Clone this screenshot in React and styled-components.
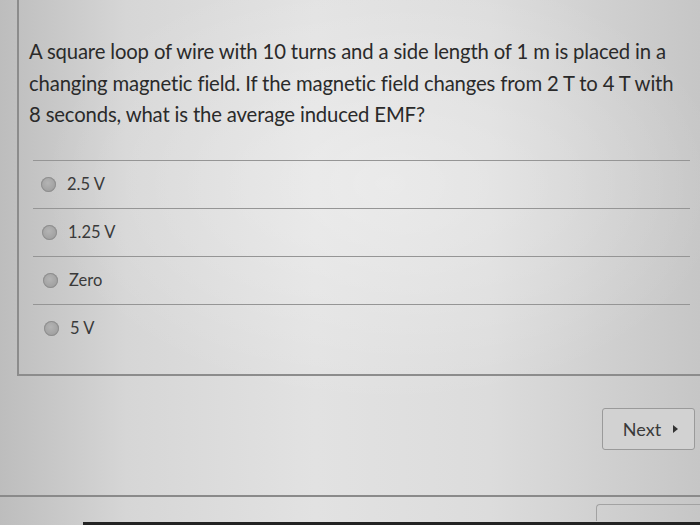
import styled, { createGlobalStyle } from "styled-components";

const GlobalStyle = createGlobalStyle`
  html, body {
    margin: 0;
    padding: 0;
  }
  body {
    font-family: Lato, "Open Sans", "Liberation Sans", sans-serif;
    color: #2f2f2f;
  }
`;

const Screen = styled.div`
  width: 700px;
  height: 525px;
  overflow: hidden;
  display: flex;
  flex-direction: column;
  background:
    radial-gradient(ellipse 70% 60% at 55% 35%, rgba(255, 255, 255, 0.35), rgba(255, 255, 255, 0) 70%),
    linear-gradient(90deg, #bdbdbd 0%, #d6d6d6 18%, #e2e2e2 45%, #dcdcdc 70%, #c6c6c6 100%);
`;

const Card = styled.section`
  margin-left: 17px;
  padding: 36px 10px 22px 10px;
  border-left: 2px solid #8c8c8c;
  border-bottom: 2px solid #8c8c8c;
  display: flex;
  flex-direction: column;
`;

const Question = styled.p`
  margin: 0;
  font-size: 20.3px;
  line-height: 31.5px;
  color: #2a2a2a;
  letter-spacing: -0.15px;
  white-space: nowrap;
`;

const Options = styled.ul`
  list-style: none;
  margin: 29px 0 0 4px;
  padding: 0;
`;

const Option = styled.li`
  height: 47px;
  border-top: 1.5px solid #959595;
  display: flex;
  align-items: center;
  gap: 11px;
  padding-left: ${(props) => props.$indent}px;
  font-size: 16.5px;
  color: #3a3a3a;
`;

const Radio = styled.span`
  width: 15px;
  height: 15px;
  border-radius: 50%;
  flex-shrink: 0;
  background: radial-gradient(circle at 45% 40%, #b4b4b4, #979797);
  box-shadow: inset 0 0 0 1px #8f8f8f;
`;

const Footer = styled.div`
  display: flex;
  justify-content: flex-end;
  padding: 32px 5px 0 0;
`;

const NextButton = styled.button`
  width: 93px;
  height: 42px;
  display: flex;
  align-items: center;
  justify-content: center;
  gap: 12px;
  padding: 0 0 0 4px;
  border: 1px solid #9a9a9a;
  border-radius: 3px;
  background: #d2d2d2;
  font-family: inherit;
  font-size: 18px;
  color: #3a3a3a;
`;

const Arrow = styled.span`
  width: 0;
  height: 0;
  border-top: 4px solid transparent;
  border-bottom: 4px solid transparent;
  border-left: 5px solid #333;
`;

const Divider = styled.div`
  margin-top: 45px;
  border-top: 2px solid #8a8a8a;
`;

const BottomRow = styled.div`
  flex: 1;
  display: flex;
  flex-direction: column;
  justify-content: space-between;
  padding-top: 7px;
`;

const NextBox = styled.div`
  align-self: flex-end;
  width: 103px;
  height: 16px;
  border: 1px solid #a2a2a2;
  border-right: none;
  border-bottom: none;
  border-top-left-radius: 4px;
`;

const DarkEdge = styled.div`
  margin-left: 83px;
  height: 3px;
  background: #232323;
`;

const answers = ["2.5 V", "1.25 V", "Zero", "5 V"];

export default function App() {
  return (
    <>
      <GlobalStyle />
      <Screen>
        <Card>
          <Question>
            A square loop of wire with 10 turns and a side length of 1 m is
            placed in a
            <br />
            changing magnetic field. If the magnetic field changes from 2 T to
            4 T with
            <br />8 seconds, what is the average induced EMF?
          </Question>
          <Options>
            {answers.map((answer, i) => (
              <Option key={answer} $indent={8 + i}>
                <Radio />
                {answer}
              </Option>
            ))}
          </Options>
        </Card>
        <Footer>
          <NextButton>
            Next
            <Arrow />
          </NextButton>
        </Footer>
        <Divider />
        <BottomRow>
          <NextBox />
          <DarkEdge />
        </BottomRow>
      </Screen>
    </>
  );
}
